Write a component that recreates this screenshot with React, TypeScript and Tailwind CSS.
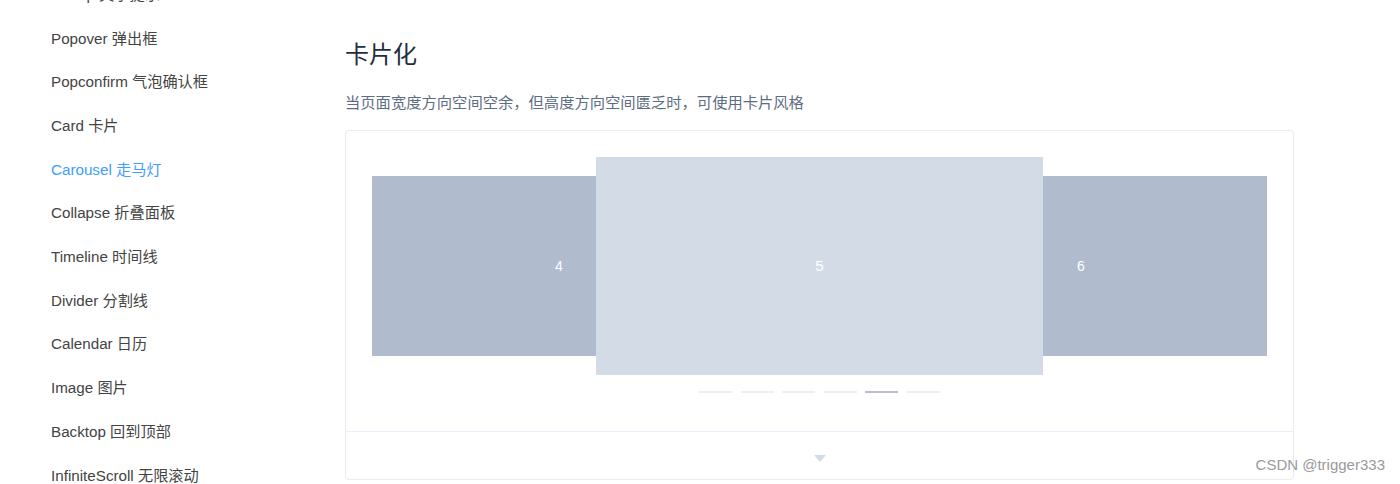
import React, { useState } from 'react';

const navItems = [
  'Tooltip 文字提示',
  'Popover 弹出框',
  'Popconfirm 气泡确认框',
  'Card 卡片',
  'Carousel 走马灯',
  'Collapse 折叠面板',
  'Timeline 时间线',
  'Divider 分割线',
  'Calendar 日历',
  'Image 图片',
  'Backtop 回到顶部',
  'InfiniteScroll 无限滚动',
];

const font = { fontFamily: '"Liberation Sans", Arial, "Noto Sans CJK SC", sans-serif' };

const Sidebar: React.FC = () => (
  <nav className="w-[345px] shrink-0 pl-[51px]">
    <ul className="-mt-[26.5px] flex flex-col">
      {navItems.map((item) => (
        <li
          key={item}
          className={
            'flex h-[43.7px] items-center text-[15.2px] ' +
            (item.startsWith('Carousel') ? 'text-[#409eff]' : 'text-[#444]')
          }
        >
          {item}
        </li>
      ))}
    </ul>
  </nav>
);

const CardCarousel: React.FC = () => {
  const [active] = useState(4);

  return (
    <div>
      <div className="flex h-[218px] items-center">
        <div className="flex h-[180px] w-[224px] items-center bg-[#b0bccd] text-[14px] text-white">
          <span className="ml-[183px]">4</span>
        </div>
        <div className="flex h-[218px] w-[447px] items-center justify-center bg-[#d3dce6] text-[15px] text-white">
          5
        </div>
        <div className="flex h-[180px] w-[224px] items-center bg-[#b0bccd] text-[14px] text-white">
          <span className="ml-[34px]">6</span>
        </div>
      </div>
      <div className="mt-[16px] flex justify-center gap-[8.6px]">
        {[0, 1, 2, 3, 4, 5].map((i) => (
          <span
            key={i}
            className={'h-[2px] w-[33px] ' + (i === active ? 'bg-[#b9bdc9]' : 'bg-[#efefef]')}
          />
        ))}
      </div>
    </div>
  );
};

const App: React.FC = () => {
  return (
    <div className="relative h-[484px] w-[1400px] overflow-hidden bg-white" style={font}>
      <div className="flex">
        <Sidebar />
        <main className="w-[949px] pt-[39px]">
          <h3 className="h-[32px] text-[24px] leading-[32px] font-normal text-[#1f2f3d]">卡片化</h3>
          <p className="mt-[21px] text-[15.3px] leading-[22px] text-[#5e6d82]">
            当页面宽度方向空间空余，但高度方向空间匮乏时，可使用卡片风格
          </p>
          <div className="mt-[16px] rounded-[4px] border border-[#ebebeb]">
            <div className="h-[300px] px-[26px] pt-[26px]">
              <CardCarousel />
            </div>
            <div className="flex h-[48px] items-center justify-center border-t border-[#eaeefb]">
              <svg width="12" height="7" viewBox="0 0 12 7" className="mt-[5px]">
                <path d="M0 0 H12 L6 7 Z" fill="#d3dce6" />
              </svg>
            </div>
          </div>
        </main>
      </div>
      <div className="absolute right-[15px] bottom-[8px] text-[15px] text-[#9a9a9a]">CSDN @trigger333</div>
    </div>
  );
};

export default App;
